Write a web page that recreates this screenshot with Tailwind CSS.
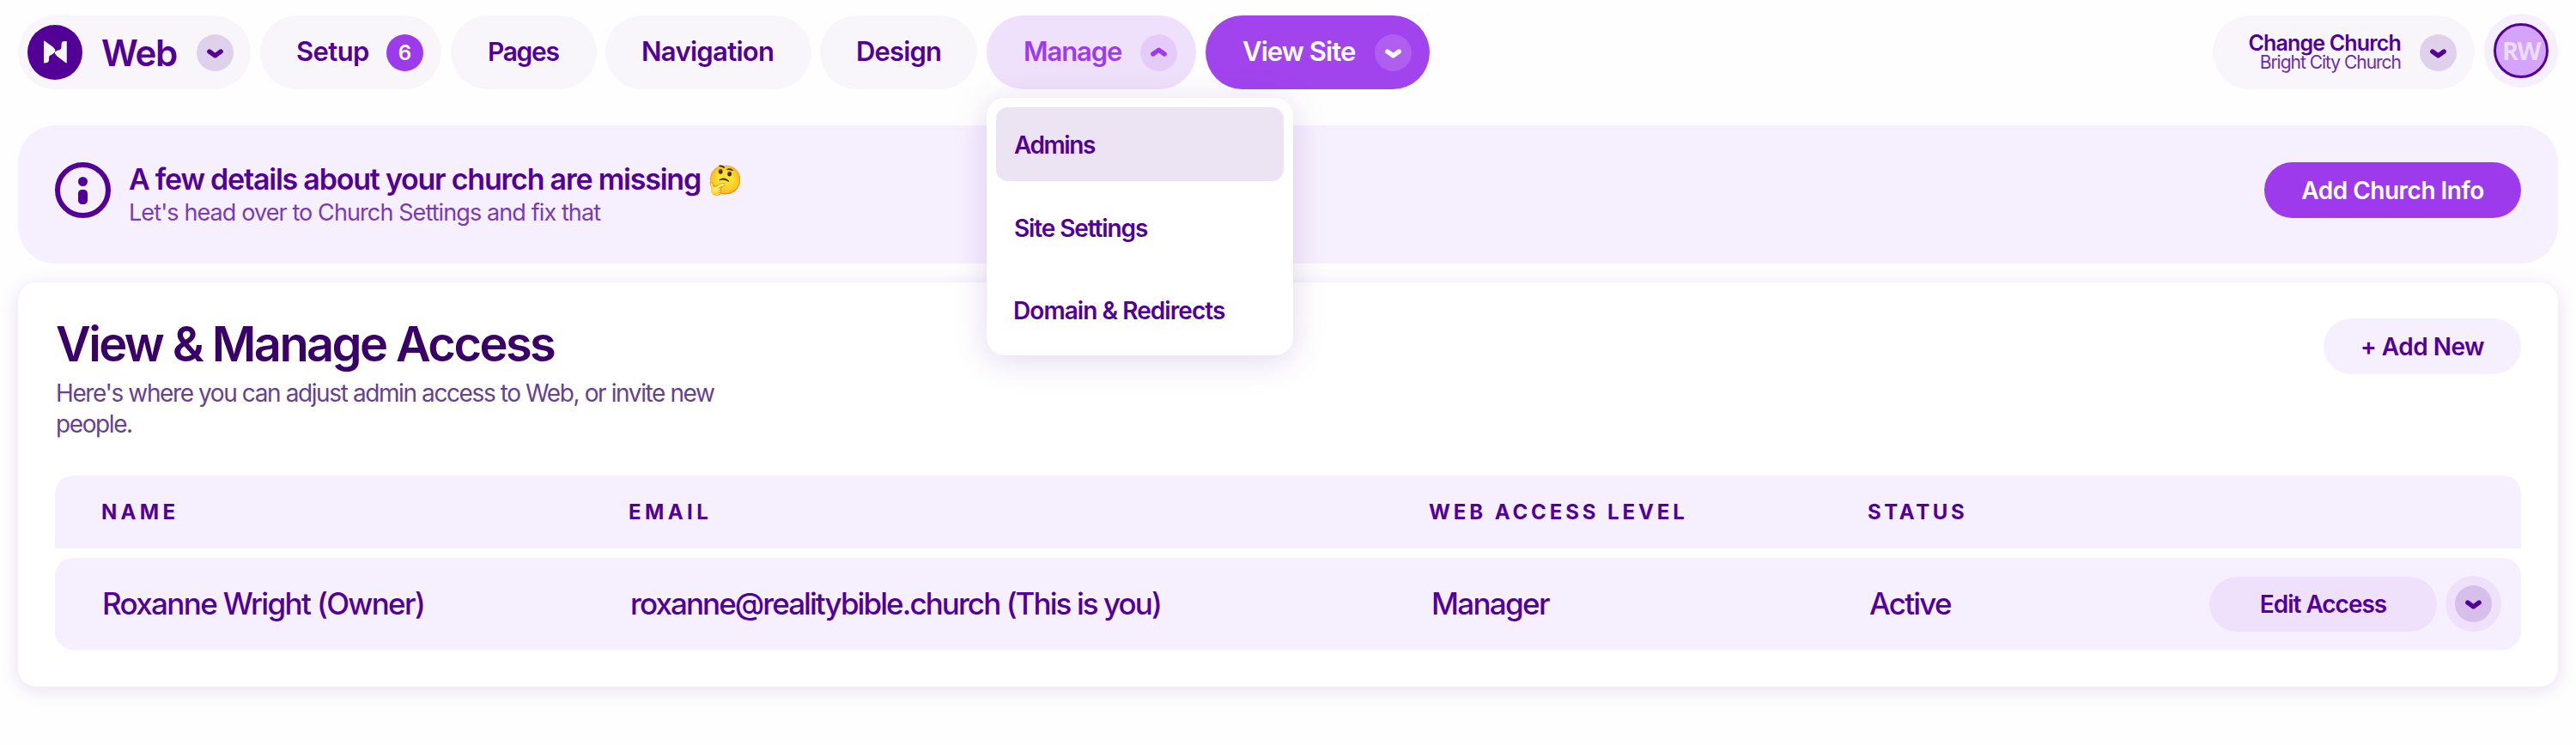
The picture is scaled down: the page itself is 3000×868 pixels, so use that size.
<!DOCTYPE html>
<html lang="en">
<head>
<meta charset="utf-8">
<title>Web – View &amp; Manage Access</title>
<script src="https://cdn.jsdelivr.net/npm/@tailwindcss/browser@4"></script>
</head>
<body class="bg-[#fefefe] font-['Inter',sans-serif] text-[#520096] w-[3000px] h-[868px] overflow-hidden whitespace-nowrap">

<svg class="hidden">
  <symbol id="chev" viewBox="0 0 43 43"><path d="M14.800 20L21.500 24.900L28.200 20" fill="none" stroke="currentColor" stroke-width="5.300" stroke-linecap="round" stroke-linejoin="round"/></symbol>
</svg>

<header class="flex items-start justify-between pl-[21px] pr-[21px] pt-4 h-[146px]">
  <nav class="flex gap-[11px] pt-[2px] text-[31px] font-semibold">
    <a class="flex items-center w-[271px] h-[86px] rounded-full bg-[#f8f6fb] pl-[11px] pr-5">
      <svg class="size-16" viewBox="0 0 64 64">
        <circle cx="32" cy="32" r="32" fill="#520096"/>
        <path d="M19 19.5q0-1.600 1.300-.6L29.500 25.500Q33.500 29 31.800 31.800Q34 29.500 37 29.300Q39.500 28.800 39.500 26V23Q39.500 19 43 19H45.800V43.500Q45.800 45 44.300 44L34.500 36.500Q31.500 33.800 31.800 31.800Q29 34.800 27.500 34.900Q25 35.400 25 38V41Q25 44.500 19 44.500Z" fill="#f8f6fb"/>
      </svg>
      <span class="ml-[22px] text-[42px] tracking-[-1.28px]">Web</span>
      <svg class="ml-auto size-[43px] rounded-full bg-[#dfd1eb]"><use href="#chev"/></svg>
    </a>
    <a class="flex items-center w-[211px] h-[86px] rounded-full bg-[#f8f6fb] pl-[42px] pr-[21px]">
      <span class="pb-[2px] tracking-[-0.6px]">Setup</span>
      <span class="ml-auto size-[43px] rounded-full bg-[#9d3bec] text-white text-[24px] font-semibold flex items-center justify-center pt-px">6</span>
    </a>
    <a class="flex items-center w-[170px] h-[86px] rounded-full bg-[#f8f6fb] pl-[43px] pb-[2px] text-[30px] tracking-[-1.35px]">Pages</a>
    <a class="flex items-center w-[240px] h-[86px] rounded-full bg-[#f8f6fb] pl-[42px] pb-[2px] tracking-[-0.69px] -ml-px">Navigation</a>
    <a class="flex items-center w-[183px] h-[86px] rounded-full bg-[#f8f6fb] pl-[42px] pb-[2px] tracking-[-0.85px] -ml-px">Design</a>
    <div class="relative">
      <a class="flex items-center w-[244px] h-[86px] rounded-full bg-[#efe1fb] pl-[43px] pr-[22px] text-[#9d3bec]">
        <span class="pb-[2px] tracking-[-1.11px]">Manage</span>
        <svg class="ml-auto size-[43px] rounded-full bg-[#e5cbf9] rotate-180"><use href="#chev"/></svg>
      </a>
      <div class="absolute z-10 left-0 top-24 w-[357px] h-[300px] rounded-[21px] bg-white p-[11px] flex flex-col gap-[10px] text-[28px] shadow-[0_6px_40px_rgba(82,0,150,0.16)]">
        <a class="flex items-center h-[86px] rounded-[14px] bg-[#ece4f3] pl-[21px] pt-[2px] tracking-[-1.42px]">Admins</a>
        <a class="flex items-center h-[86px] rounded-[14px] pl-[21px] pt-[3px] tracking-[-1.12px]">Site Settings</a>
        <a class="flex items-center h-[86px] rounded-[14px] pl-5 pt-[3px] tracking-[-0.94px]">Domain &amp; Redirects</a>
      </div>
    </div>
    <a class="flex items-center w-[261px] h-[86px] rounded-full bg-[#a244ee] pl-[43px] pr-[21px] text-white">
      <span class="pb-[2px] tracking-[-0.91px]">View Site</span>
      <svg class="ml-auto size-[43px] rounded-full bg-[#b05eef]"><use href="#chev"/></svg>
    </a>
  </nav>
  <div class="flex gap-[11px]">
    <a class="mt-[2px] flex items-center justify-end w-[305px] h-[86px] rounded-full bg-[#f8f6fb] pr-[21px]">
      <span class="flex flex-col items-end mr-[22px]">
        <span class="text-[25px] leading-[23px] font-semibold tracking-[-0.84px]">Change Church</span>
        <span class="text-[21px] leading-[21px] tracking-[-1.02px] text-[#6f2ca8]">Bright City Church</span>
      </span>
      <svg class="size-[43px] rounded-full bg-[#dfd1eb]"><use href="#chev"/></svg>
    </a>
    <div class="size-[86px] rounded-full bg-[#f6f0fe] flex items-center justify-center">
      <span class="size-16 rounded-full border-[3px] border-[#520096] bg-[#d4a3fa] text-[#eedcfe] font-['Open_Sans',sans-serif] font-bold text-[29px] tracking-[-1.5px] flex items-center justify-center">RW</span>
    </div>
  </div>
</header>

<section class="mx-[21px] h-[161px] rounded-[43px] bg-[#f6f0fe] flex items-start pl-[43px] pr-[43px] pt-[43px]">
  <svg class="size-[65px] shrink-0" viewBox="0 0 65 65" fill="#520096">
    <circle cx="32.500" cy="32.500" r="29.500" fill="none" stroke="#520096" stroke-width="6"/>
    <circle cx="32.500" cy="22.500" r="5.500"/>
    <rect x="27" y="32" width="11" height="17" rx="4.500"/>
  </svg>
  <div class="ml-[21px] -mt-[3px]">
    <h2 class="text-[34px] leading-[46px] font-semibold tracking-[-1.22px]">A few details about your church are missing <span class="text-[33px] ml-[1px]">🤔</span></h2>
    <p class="text-[27px] leading-[32px] tracking-[-0.9px] text-[#7b3ab1]">Let's head over to Church Settings and fix that</p>
  </div>
  <a class="ml-auto w-[299px] h-[65px] rounded-full bg-[#9d3bec] text-white text-[28px] font-semibold tracking-[-0.5px] flex items-center justify-center pt-px">Add Church Info</a>
</section>

<main class="mx-[21px] mt-[22px] h-[471px] rounded-[21px] bg-white px-[43px] pt-[42px] shadow-[0_4px_22px_rgba(82,0,150,0.13)]">
  <div class="flex justify-between items-start h-[183px]">
    <div class="pl-px">
      <h1 class="text-[56px] leading-[60px] font-semibold tracking-[-2.6px] text-[#390068]">View &amp; Manage Access</h1>
      <p class="mt-[9px] text-[28px] leading-[36px] tracking-[-1.4px] text-[#693f90] w-[790px] whitespace-normal">Here's where you can adjust admin access to Web, or invite new people.</p>
    </div>
    <a class="w-[230px] h-[65px] rounded-full bg-[#f6f0fe] text-[28px] font-semibold tracking-[-0.53px] flex items-center justify-center pt-px">+ Add New</a>
  </div>
  <div class="grid grid-cols-[668px_932px_511px_1fr] items-center h-[85px] rounded-t-[21px] bg-[#f6f0fe] text-[24px] font-bold">
    <span class="pl-[54px] tracking-[4.3px]">NAME</span>
    <span class="tracking-[4.4px]">EMAIL</span>
    <span class="tracking-[3.9px]">WEB ACCESS LEVEL</span>
    <span class="tracking-[3.6px]">STATUS</span>
  </div>
  <div class="mt-[11px] grid grid-cols-[670px_933px_510px_1fr] items-center h-[107px] rounded-[21px] bg-[#f6f0fe] text-[35px] font-medium">
    <span class="pl-[55px] tracking-[-1.65px]">Roxanne Wright (Owner)</span>
    <span class="tracking-[-1.93px]">roxanne@realitybible.church (This is you)</span>
    <span class="tracking-[-1.67px]">Manager</span>
    <span class="flex items-center pr-[23px]">
      <span class="tracking-[-1.78px]">Active</span>
      <a class="ml-auto w-[265px] h-16 rounded-full bg-[#efe1fb] text-[28px] font-semibold tracking-[-1.02px] flex items-center justify-center pt-px">Edit Access</a>
      <span class="ml-[10px] size-[65px] rounded-full bg-[#efe1fb] flex items-center justify-center"><svg class="size-[43px] rounded-full bg-[#d7bfec]"><use href="#chev"/></svg></span>
    </span>
  </div>
</main>
</body>
</html>
